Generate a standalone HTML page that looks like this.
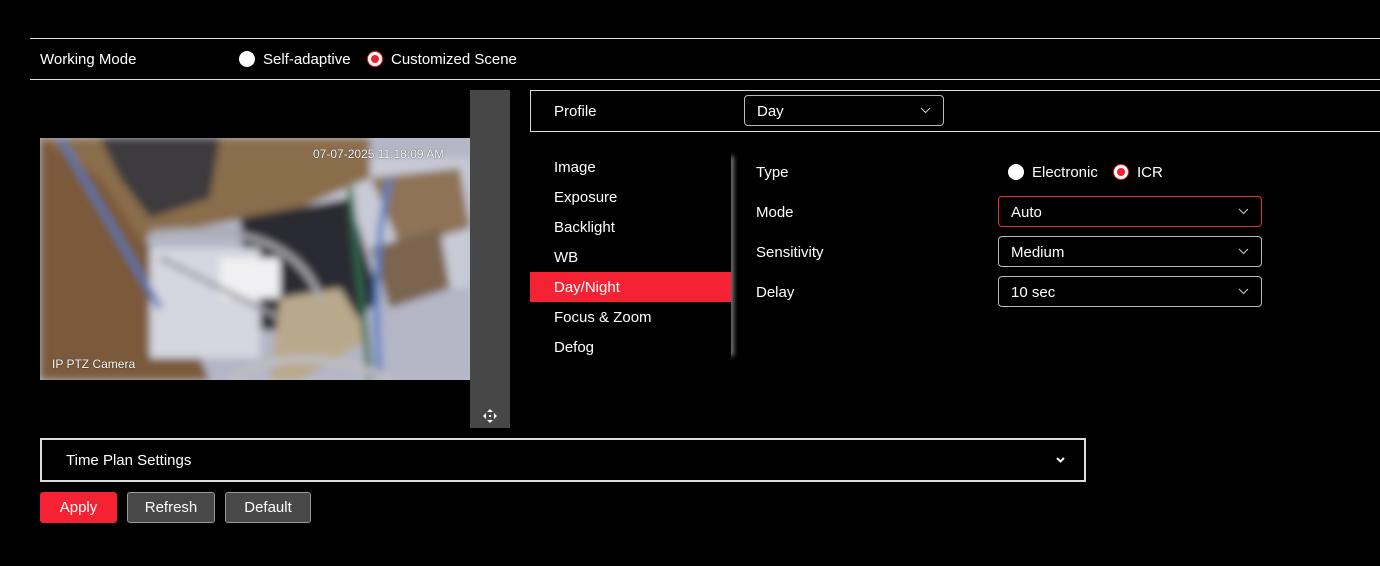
<!DOCTYPE html>
<html><head><meta charset="utf-8"><style>
*{margin:0;padding:0;box-sizing:border-box}
body{width:1380px;height:566px;background:#000;color:#fff;font-family:"Liberation Sans",sans-serif;font-size:15px;position:relative;overflow:hidden}
.a{position:absolute}
.hl{position:absolute;height:1px;background:#ddd}
.t{position:absolute;line-height:20px;white-space:nowrap;margin-top:1px}
.radio{position:absolute;width:16px;height:16px;border-radius:50%;background:#fff}
.radio.on{background:#fff;border:1px solid #f0202e}
.radio.on::after{content:"";position:absolute;left:3px;top:3px;width:8px;height:8px;border-radius:50%;background:#f0202e}
.sel{position:absolute;border:1px solid #bbb;border-radius:4px;height:31px;padding-left:12px;line-height:31px}
.sel svg{position:absolute;right:12px;top:11px}
.btn{position:absolute;height:31px;border-radius:3px;text-align:center;line-height:31px}
</style></head><body>
<div class="hl" style="left:30px;top:38px;width:1350px"></div>
<div class="t" style="left:40px;top:49px">Working Mode</div>
<div class="radio" style="left:239px;top:51px"></div>
<div class="t" style="left:263px;top:49px">Self-adaptive</div>
<div class="radio on" style="left:367px;top:51px"></div>
<div class="t" style="left:391px;top:49px">Customized Scene</div>
<div class="hl" style="left:30px;top:79px;width:1350px"></div>

<!-- video -->
<div class="a" style="left:40px;top:138px;width:430px;height:242px;overflow:hidden;background:#b9bccc">
<svg width="430" height="242" viewBox="0 0 430 242">
<defs><filter id="b"><feGaussianBlur stdDeviation="4"/></filter></defs>
<g filter="url(#b)">
<rect x="0" y="0" width="430" height="242" fill="#b4b6c6"/>
<rect x="240" y="20" width="190" height="130" fill="#c8cad6"/>
<polygon points="0,0 60,0 170,242 0,242" fill="#7a5a3a"/>
<polygon points="0,0 330,0 330,40 260,70 100,100 60,40" fill="#8a6d4c"/>
<polygon points="60,0 180,0 170,60 110,80 80,40" fill="#3e3b3d"/>
<polygon points="200,80 310,60 340,160 300,200 210,190" fill="#2b2a30"/>
<polygon points="330,40 420,30 430,90 360,110 340,60" fill="#8e7357"/>
<polygon points="330,110 400,90 410,150 350,170" fill="#7b6550"/>
<polygon points="240,160 300,150 330,200 260,242 230,242" fill="#b9a98c"/>
<rect x="110" y="110" width="110" height="110" fill="#d6d6e0"/>
<rect x="180" y="120" width="60" height="40" fill="#f0f0f2"/>
<path d="M20 0 L120 170" stroke="#4f77b5" stroke-width="6" fill="none"/>
<path d="M350 40 Q330 120 340 242" stroke="#4f7ec4" stroke-width="6" fill="none"/>
<path d="M310 50 Q320 150 330 242" stroke="#2f6b50" stroke-width="6" fill="none"/>
<path d="M110 95 Q250 80 280 160" stroke="#a8a8ac" stroke-width="6" fill="none"/>
<path d="M120 120 Q200 160 240 180" stroke="#9a9aa0" stroke-width="5" fill="none"/>
<path d="M190 242 Q260 200 350 242" stroke="#bdbdc0" stroke-width="8" fill="none"/>
</g></svg>
<div class="a" style="left:273px;top:9px;font-size:12px;color:#fff;text-shadow:0 0 1px #000">07-07-2025 11:18:09 AM</div>
<div class="a" style="left:12px;top:219px;font-size:12px;color:#fff;text-shadow:0 0 1px #000">IP PTZ Camera</div>
</div>
<div class="a" style="left:470px;top:90px;width:40px;height:338px;background:#474747"></div>
<svg class="a" style="left:483px;top:409px" width="14" height="14" viewBox="0 0 14 14" fill="#fff"><polygon points="7,0 10,3 4,3"/><polygon points="7,14 10,11 4,11"/><polygon points="0,7 3,4 3,10"/><polygon points="14,7 11,4 11,10"/><rect x="6" y="6" width="2" height="2"/></svg>

<!-- profile -->
<div class="a" style="left:530px;top:90px;width:860px;height:42px;border:1px solid #ddd"></div>
<div class="t" style="left:554px;top:101px">Profile</div>
<div class="sel" style="left:744px;top:95px;width:200px">Day<svg width="11" height="7" viewBox="0 0 11 7"><path d="M1 1L5.5 5.5L10 1" stroke="#ccc" fill="none"/></svg></div>

<!-- menu -->
<div class="a" style="left:724px;top:156px;width:7px;height:200px;box-shadow:3px 0 5px rgba(255,255,255,0.45)"></div>
<div class="a" style="left:530px;top:152px;width:201px;height:206px;background:#000"></div>
<div class="a" style="left:530px;top:272px;width:201px;height:30px;background:#f42233"></div>
<div class="t" style="left:554px;top:157px">Image</div>
<div class="t" style="left:554px;top:187px">Exposure</div>
<div class="t" style="left:554px;top:217px">Backlight</div>
<div class="t" style="left:554px;top:247px">WB</div>
<div class="t" style="left:554px;top:277px">Day/Night</div>
<div class="t" style="left:554px;top:307px">Focus &amp; Zoom</div>
<div class="t" style="left:554px;top:337px">Defog</div>

<!-- fields -->
<div class="t" style="left:756px;top:162px">Type</div>
<div class="radio" style="left:1008px;top:164px"></div>
<div class="t" style="left:1032px;top:162px">Electronic</div>
<div class="radio on" style="left:1113px;top:164px"></div>
<div class="t" style="left:1137px;top:162px">ICR</div>
<div class="t" style="left:756px;top:202px">Mode</div>
<div class="sel" style="left:998px;top:196px;width:264px;border-color:#e0303a">Auto<svg width="11" height="7" viewBox="0 0 11 7"><path d="M1 1L5.5 5.5L10 1" stroke="#ccc" fill="none"/></svg></div>
<div class="t" style="left:756px;top:242px">Sensitivity</div>
<div class="sel" style="left:998px;top:236px;width:264px">Medium<svg width="11" height="7" viewBox="0 0 11 7"><path d="M1 1L5.5 5.5L10 1" stroke="#ccc" fill="none"/></svg></div>
<div class="t" style="left:756px;top:282px">Delay</div>
<div class="sel" style="left:998px;top:276px;width:264px">10 sec<svg width="11" height="7" viewBox="0 0 11 7"><path d="M1 1L5.5 5.5L10 1" stroke="#ccc" fill="none"/></svg></div>

<!-- time plan -->
<div class="a" style="left:40px;top:438px;width:1046px;height:44px;border:2px solid #ddd"></div>
<div class="t" style="left:66px;top:450px">Time Plan Settings</div>
<svg class="a" style="left:1056px;top:457px" width="9" height="6" viewBox="0 0 9 6"><path d="M1 1L4.5 4.5L8 1" stroke="#fff" stroke-width="2" fill="none"/></svg>

<div class="btn" style="left:40px;top:492px;width:77px;background:#f42233">Apply</div>
<div class="btn" style="left:127px;top:492px;width:88px;background:#484848;border:1px solid #999;line-height:29px">Refresh</div>
<div class="btn" style="left:225px;top:492px;width:86px;background:#484848;border:1px solid #999;line-height:29px">Default</div>
</body></html>
